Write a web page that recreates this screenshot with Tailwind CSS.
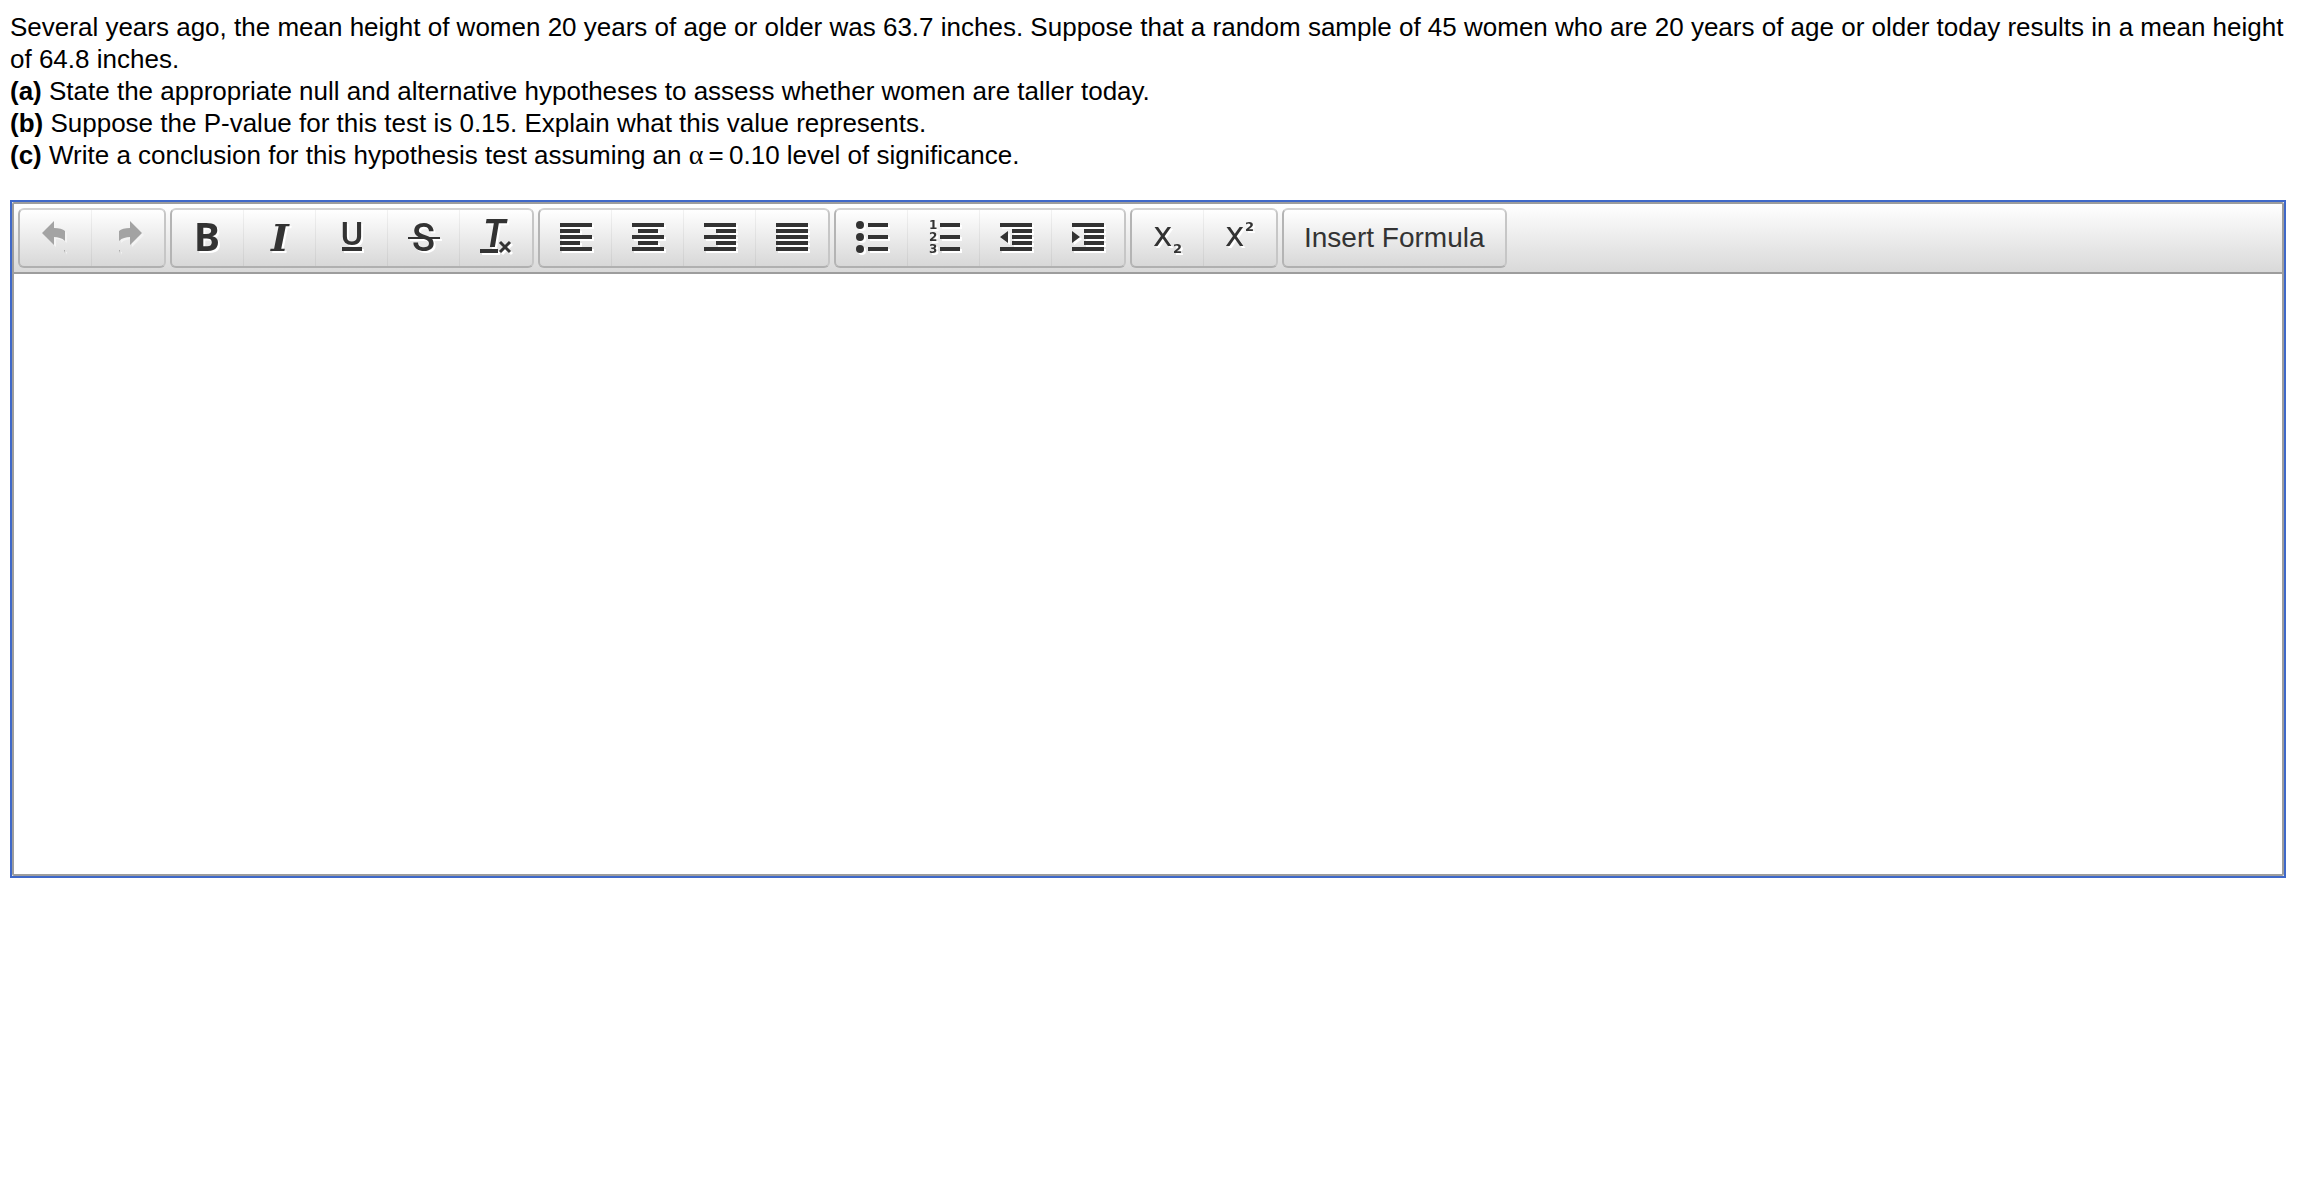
<!DOCTYPE html>
<html lang="en">
<head>
  <meta charset="UTF-8" />
  <meta name="viewport" content="width=device-width, initial-scale=1.0" />
  <title>Hypothesis Test Question</title>
  <script src="https://cdn.jsdelivr.net/npm/@tailwindcss/browser@4"></script>
</head>
<body class="bg-white text-black font-['Liberation_Sans',Arial,sans-serif]">
  <main class="pl-[10px] pr-5 pt-[11px]">

    <!-- Question -->
    <div class="text-[26px] leading-8">
      <p>Several years ago, the mean height of women 20 years of age or older was 63.7 inches. Suppose that a random sample of 45 women who are 20 years of age or older today results in a mean height of 64.8 inches.</p>
      <p><b>(a)</b> State the appropriate null and alternative hypotheses to assess whether women are taller today.</p>
      <p><b>(b)</b> Suppose the P-value for this test is 0.15. Explain what this value represents.</p>
      <p><b>(c)</b> Write a conclusion for this hypothesis test assuming an <span class="font-['Liberation_Serif',serif] text-[28px] leading-none">α</span>&thinsp;=&thinsp;0.10 level of significance.</p>
    </div>

    <!-- Editor -->
    <div class="mt-[29px] border-2 border-[#3f68c8]">
      <div class="border-2 border-[#9d9d9d] rounded-xs">

        <!-- Toolbar -->
        <div role="toolbar" aria-label="Editor toolbar" class="flex flex-wrap gap-1 p-1 border-b-2 border-[#9d9d9d] bg-linear-to-b from-white to-[#d9d9d9] text-[#333]">

          <div class="flex rounded-md border-2 border-t-[#d2d2d2] border-r-[#c6c6c6] border-b-[#b0b0b0] border-l-[#b4b4b4] bg-linear-to-b from-white to-[#d8d8d8] divide-x divide-black/5">
            <button type="button" aria-label="Undo" disabled class="w-[72px] h-14 flex items-center justify-center text-[#a3a3a3]">
              <svg class="w-8 h-9 drop-shadow-[2px_2px_0_#f4f4f4]" viewBox="0 0 32 36" fill="currentColor"><path d="M2 13 14 1V8C19 8 23 9 25 11V21C22 18 18 17 14 17V25Z" /><path d="M24 30h1v3z" /></svg>
            </button>
            <button type="button" aria-label="Redo" disabled class="w-[72px] h-14 flex items-center justify-center text-[#a3a3a3]">
              <svg class="w-8 h-9 drop-shadow-[2px_2px_0_#f4f4f4]" viewBox="0 0 32 36" fill="currentColor"><path d="M30 13 18 1V8C13 8 9 9 7 11V21C10 18 14 17 18 17V25Z" /><path d="M8 30h-1v3z" /></svg>
            </button>
          </div>

          <div class="flex rounded-md border-2 border-t-[#d2d2d2] border-r-[#c6c6c6] border-b-[#b0b0b0] border-l-[#b4b4b4] bg-linear-to-b from-white to-[#d8d8d8] divide-x divide-black/5">
            <button type="button" aria-label="Bold" class="w-[72px] h-14 flex items-center justify-center">
              <svg class="w-8 h-9 overflow-visible drop-shadow-[2px_2px_0_#fff]" viewBox="0 0 32 36" fill="currentColor"><text x="2" y="31" font-family="Noto Sans" font-size="39" font-weight="700">B</text></svg>
            </button>
            <button type="button" aria-label="Italic" class="w-[72px] h-14 flex items-center justify-center">
              <svg class="w-8 h-9 overflow-visible drop-shadow-[2px_2px_0_#fff]" viewBox="0 0 32 36" fill="currentColor"><text x="7" y="31" font-family="DejaVu Serif" font-size="38" font-style="italic" font-weight="700">I</text></svg>
            </button>
            <button type="button" aria-label="Underline" class="w-[72px] h-14 flex items-center justify-center">
              <svg class="w-8 h-9 overflow-visible drop-shadow-[2px_2px_0_#fff]" viewBox="0 0 32 36" fill="currentColor"><text x="4" y="25" font-family="Noto Sans" font-size="32" font-weight="600">U</text><path d="M6 27h20v4H6z" /></svg>
            </button>
            <button type="button" aria-label="Strikethrough" class="w-[72px] h-14 flex items-center justify-center">
              <svg class="w-8 h-9 overflow-visible drop-shadow-[2px_2px_0_#fff]" viewBox="0 0 32 36" fill="currentColor"><text x="4" y="31" font-family="Roboto" font-size="38" font-weight="500">S</text><path d="M0 17h32v2H0z" /></svg>
            </button>
            <button type="button" aria-label="Remove format" class="w-[72px] h-14 flex items-center justify-center">
              <svg class="w-8 h-9 overflow-visible drop-shadow-[2px_2px_0_#fff]" viewBox="0 0 32 36" fill="currentColor"><text x="3" y="27" font-family="Roboto" font-size="38" font-style="italic" font-weight="600">T</text><path d="M0 29h18v4H0z" /><path d="M20 22l10 10M30 22l-10 10" fill="none" stroke="currentColor" stroke-width="3" /></svg>
            </button>
          </div>

          <div class="flex rounded-md border-2 border-t-[#d2d2d2] border-r-[#c6c6c6] border-b-[#b0b0b0] border-l-[#b4b4b4] bg-linear-to-b from-white to-[#d8d8d8] divide-x divide-black/5">
            <button type="button" aria-label="Align left" class="w-[72px] h-14 flex items-center justify-center">
              <svg class="w-8 h-9 overflow-visible drop-shadow-[2px_2px_0_#fff]" viewBox="0 0 32 36" fill="currentColor"><path d="M0 3h32v4H0zM0 9h20v4H0zM0 15h32v4H0zM0 21h20v4H0zM0 27h32v4H0z" /></svg>
            </button>
            <button type="button" aria-label="Center" class="w-[72px] h-14 flex items-center justify-center">
              <svg class="w-8 h-9 overflow-visible drop-shadow-[2px_2px_0_#fff]" viewBox="0 0 32 36" fill="currentColor"><path d="M0 3h32v4H0zM6 9h20v4H6zM0 15h32v4H0zM6 21h20v4H6zM0 27h32v4H0z" /></svg>
            </button>
            <button type="button" aria-label="Align right" class="w-[72px] h-14 flex items-center justify-center">
              <svg class="w-8 h-9 overflow-visible drop-shadow-[2px_2px_0_#fff]" viewBox="0 0 32 36" fill="currentColor"><path d="M0 3h32v4H0zM12 9h20v4H12zM0 15h32v4H0zM12 21h20v4H12zM0 27h32v4H0z" /></svg>
            </button>
            <button type="button" aria-label="Justify" class="w-[72px] h-14 flex items-center justify-center">
              <svg class="w-8 h-9 overflow-visible drop-shadow-[2px_2px_0_#fff]" viewBox="0 0 32 36" fill="currentColor"><path d="M0 3h32v4H0zM0 9h32v4H0zM0 15h32v4H0zM0 21h32v4H0zM0 27h32v4H0z" /></svg>
            </button>
          </div>

          <div class="flex rounded-md border-2 border-t-[#d2d2d2] border-r-[#c6c6c6] border-b-[#b0b0b0] border-l-[#b4b4b4] bg-linear-to-b from-white to-[#d8d8d8] divide-x divide-black/5">
            <button type="button" aria-label="Bulleted list" class="w-[72px] h-14 flex items-center justify-center">
              <svg class="w-8 h-9 overflow-visible drop-shadow-[2px_2px_0_#fff]" viewBox="0 0 32 36" fill="currentColor"><circle cx="4" cy="5" r="4" /><circle cx="4" cy="17" r="4" /><circle cx="4" cy="29" r="4" /><path d="M12 3h20v4H12zM12 15h20v4H12zM12 27h20v4H12z" /></svg>
            </button>
            <button type="button" aria-label="Numbered list" class="w-[72px] h-14 flex items-center justify-center">
              <svg class="w-8 h-9 overflow-visible drop-shadow-[2px_2px_0_#fff]" viewBox="0 0 32 36" fill="currentColor"><g font-family="DejaVu Sans" font-size="12" font-weight="700"><text x="1" y="9">1</text><text x="1" y="21">2</text><text x="1" y="33">3</text></g><path d="M12 3h20v4H12zM12 15h20v4H12zM12 27h20v4H12z" /></svg>
            </button>
            <button type="button" aria-label="Decrease indent" class="w-[72px] h-14 flex items-center justify-center">
              <svg class="w-8 h-9 overflow-visible drop-shadow-[2px_2px_0_#fff]" viewBox="0 0 32 36" fill="currentColor"><path d="M0 3h32v4H0zM12 9h20v4H12zM12 15h20v4H12zM12 21h20v4H12zM0 27h32v4H0zM0 17l8-6v12z" /></svg>
            </button>
            <button type="button" aria-label="Increase indent" class="w-[72px] h-14 flex items-center justify-center">
              <svg class="w-8 h-9 overflow-visible drop-shadow-[2px_2px_0_#fff]" viewBox="0 0 32 36" fill="currentColor"><path d="M0 3h32v4H0zM12 9h20v4H12zM12 15h20v4H12zM12 21h20v4H12zM0 27h32v4H0zM8 17l-8-6v12z" /></svg>
            </button>
          </div>

          <div class="flex rounded-md border-2 border-t-[#d2d2d2] border-r-[#c6c6c6] border-b-[#b0b0b0] border-l-[#b4b4b4] bg-linear-to-b from-white to-[#d8d8d8] divide-x divide-black/5">
            <button type="button" aria-label="Subscript" class="w-[72px] h-14 flex items-center justify-center">
              <svg class="w-8 h-9 overflow-visible drop-shadow-[2px_2px_0_#fff]" viewBox="0 0 32 36" fill="currentColor"><text x="1" y="26" font-family="DejaVu Sans" font-size="33">x</text><text x="21" y="33" font-family="DejaVu Sans" font-size="13" font-weight="700">2</text></svg>
            </button>
            <button type="button" aria-label="Superscript" class="w-[72px] h-14 flex items-center justify-center">
              <svg class="w-8 h-9 overflow-visible drop-shadow-[2px_2px_0_#fff]" viewBox="0 0 32 36" fill="currentColor"><text x="1" y="26" font-family="DejaVu Sans" font-size="33">x</text><text x="21" y="11" font-family="DejaVu Sans" font-size="13" font-weight="700">2</text></svg>
            </button>
          </div>

          <div class="flex rounded-md border-2 border-t-[#d2d2d2] border-r-[#c6c6c6] border-b-[#b0b0b0] border-l-[#b4b4b4] bg-linear-to-b from-white to-[#d8d8d8]">
            <button type="button" class="h-14 px-5 text-[28px] leading-8">Insert Formula</button>
          </div>
        </div>

        <textarea aria-label="Your answer" class="block w-full h-[600px] p-5 text-[26px] bg-white resize-none outline-none"></textarea>
      </div>
    </div>
  </main>
</body>
</html>
